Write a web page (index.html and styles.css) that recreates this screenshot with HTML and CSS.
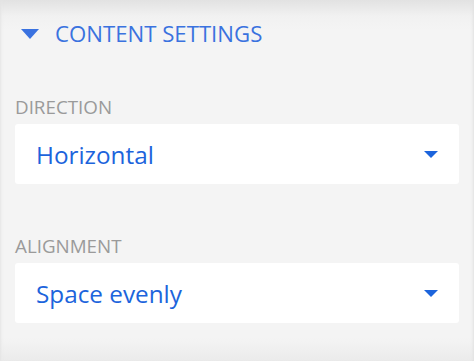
FILE: index.html
```html
<!DOCTYPE html>
<html lang="en">
<head>
  <meta charset="UTF-8" />
  <title>Content settings</title>
  <link rel="stylesheet" href="styles.css">
</head>
<body>
  <div class="panel">
    <div class="section-head">
      <span class="caret"></span>
      <h2>CONTENT SETTINGS</h2>
    </div>

    <div class="field">
      <label for="direction">DIRECTION</label>
      <div class="select" id="direction">
        <span>Horizontal</span>
        <span class="arrow"></span>
      </div>
    </div>

    <div class="field">
      <label for="alignment">ALIGNMENT</label>
      <div class="select" id="alignment">
        <span>Space evenly</span>
        <span class="arrow"></span>
      </div>
    </div>
  </div>
</body>
</html>
```

FILE: styles.css
```css
html, body {
  margin: 0; padding: 0;
  height: 100%;
}
body {
  font-family: "Open Sans", "DejaVu Sans", sans-serif;
  background-color: #f4f4f4;
}
.panel {
  height: 361px;
  box-sizing: border-box;
  padding: 0 15px 0 15px;
  background: linear-gradient(to bottom, #e2e2e2 0px, #f1f1f1 16px, #f4f4f4 30px, #f4f4f4 338px, #ebebeb 361px);
  box-shadow: inset 3px 0 3px -2px #e4e4e4, inset -3px 0 3px -2px #e0e0e0;
}
.section-head {
  display: flex;
  align-items: center;
  height: 68px;
  padding-left: 6px;
}
.caret {
  width: 0; height: 0;
  border-left: 9px solid transparent;
  border-right: 9px solid transparent;
  border-top: 10px solid #3a72e0;
  margin-right: 16px;
}
h2 {
  margin: 0;
  font-size: 22.2px;
  line-height: 30px;
  font-weight: 500;
  color: #3a72df;
}
.field {
  margin-top: 27px;
}
.field + .field {
  margin-top: 50px;
}
label {
  display: block;
  font-size: 18.8px;
  line-height: 25px;
  font-weight: 500;
  color: #9a9a9a;
  margin-bottom: 4px;
}
.select {
  display: flex;
  align-items: center;
  justify-content: space-between;
  height: 60px;
  padding: 0 21px 0 21px;
  background-color: white;
  border-radius: 3px;
  font-size: 24.3px;
  color: #1c64dc;
}
.arrow {
  width: 0; height: 0;
  border-left: 7px solid transparent;
  border-right: 7px solid transparent;
  border-top: 7px solid #1c64dc;
}
```
